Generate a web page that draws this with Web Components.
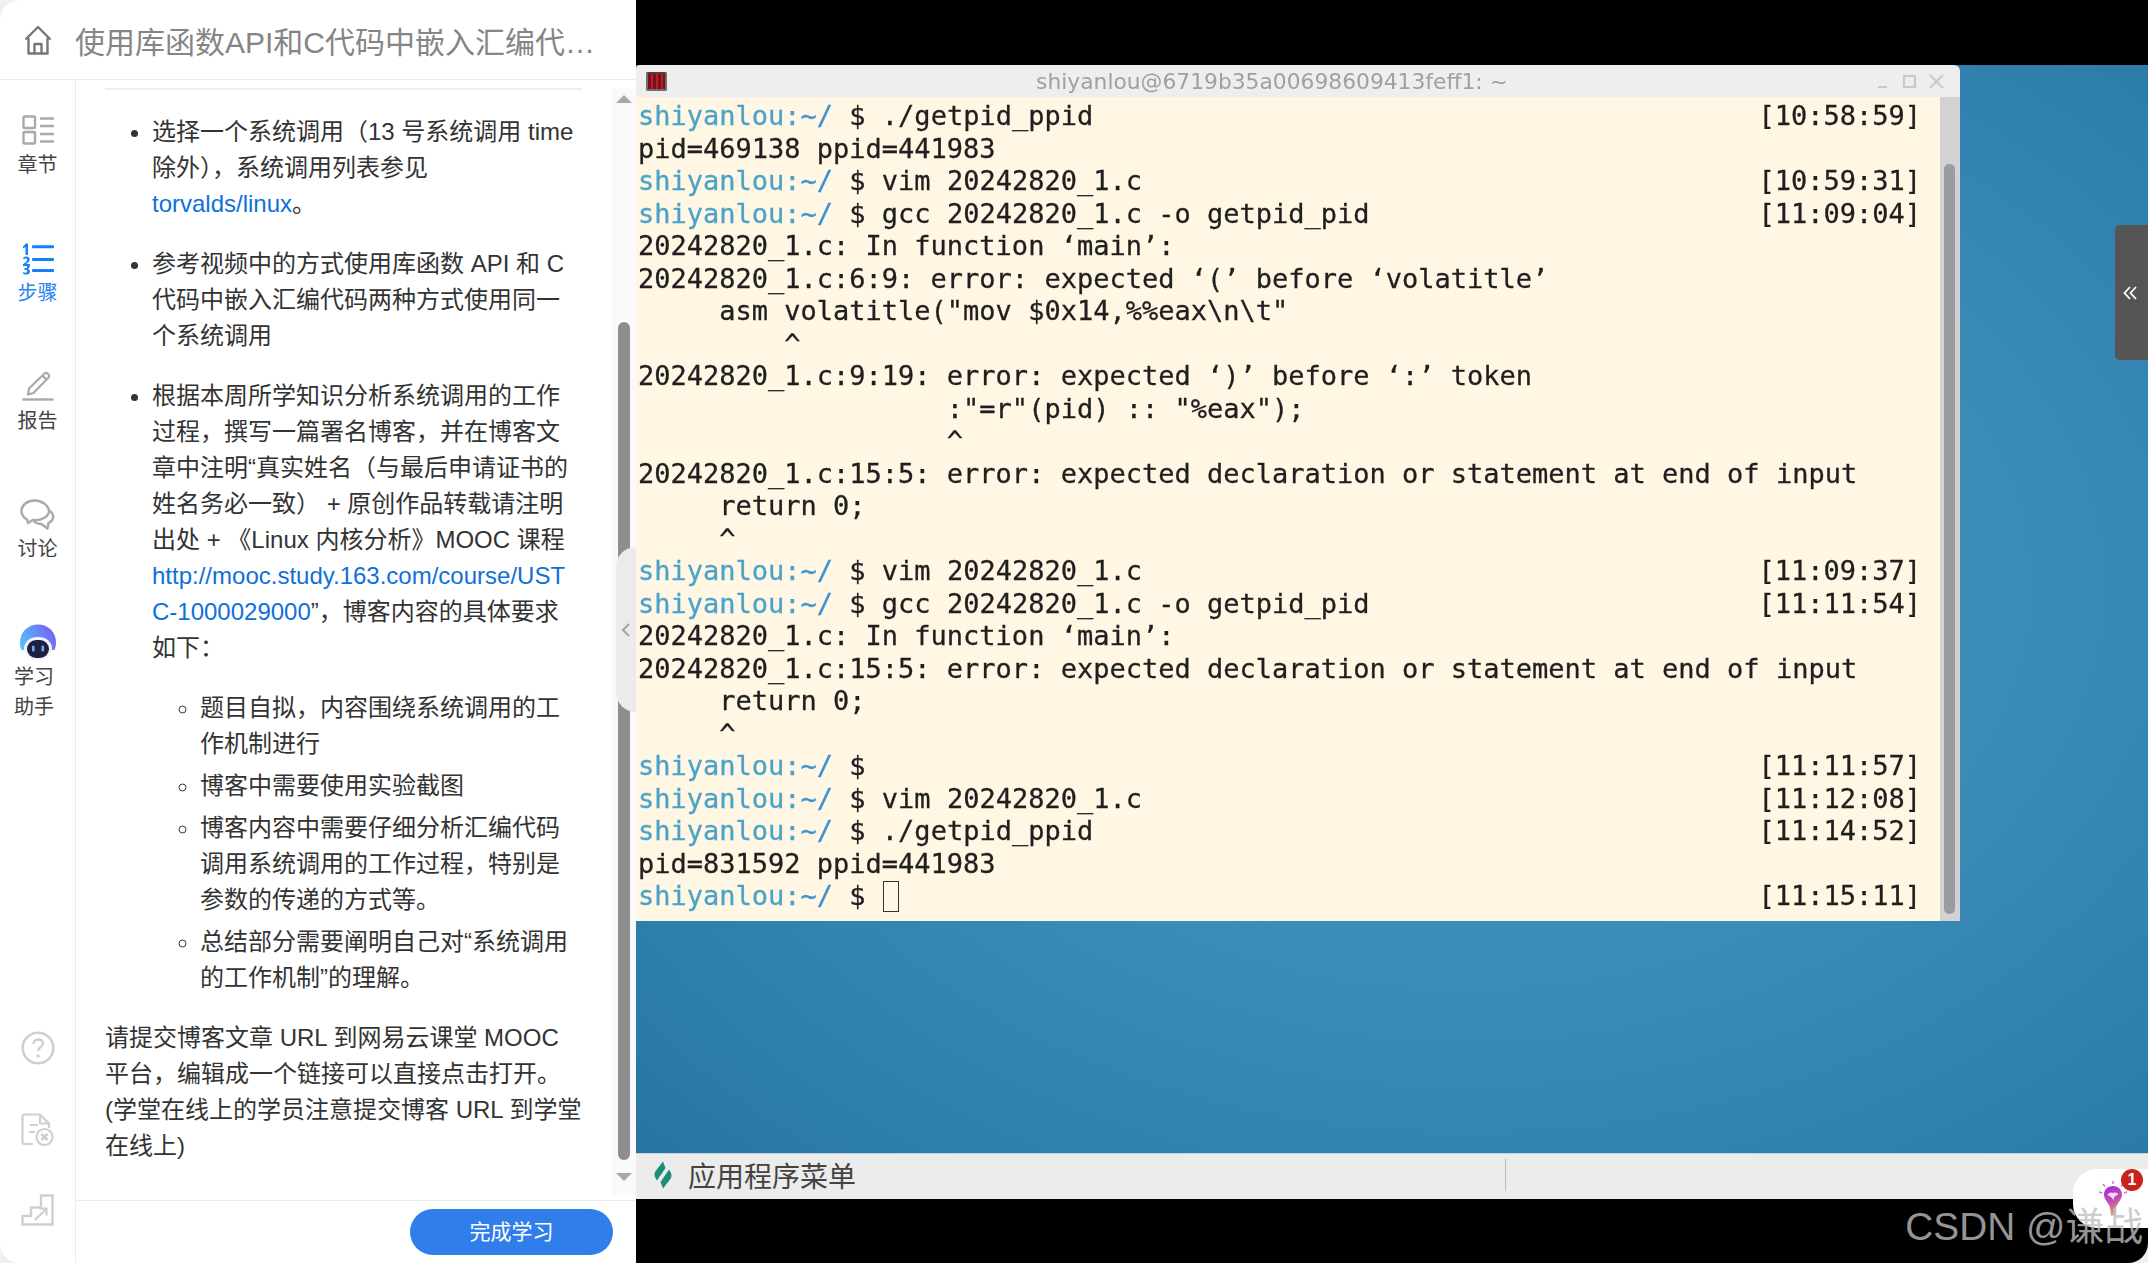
<!DOCTYPE html>
<html lang="zh">
<head>
<meta charset="utf-8">
<title>实验</title>
<style>
    html, body { margin: 0; padding: 0; background: #f0f0f0; }
    body { width: 2148px; height: 1263px; overflow: hidden; font-family: "Liberation Sans", "Noto Sans CJK SC", sans-serif; }
</style>
</head>
<body>
<lab-page>
    <lesson-panel slot="left" heading="使用库函数API和C代码中嵌入汇编代码两种方式使用同一个系统调用">
        <side-rail slot="rail"></side-rail>
        <lab-article>
            <ul>
                <li>选择一个系统调用（13 号系统调用 time 除外），系统调用列表参见 <a>torvalds/linux</a>。</li>
                <li>参考视频中的方式使用库函数 API 和 C 代码中嵌入汇编代码两种方式使用同一个系统调用</li>
                <li>根据本周所学知识分析系统调用的工作过程，撰写一篇署名博客，并在博客文章中注明“真实姓名（与最后申请证书的姓名务必一致） + 原创作品转载请注明出处 + 《Linux 内核分析》MOOC 课程 <a class="url">http://mooc.study.163.com/course/USTC-1000029000</a>”，博客内容的具体要求如下：
                    <ul>
                        <li>题目自拟，内容围绕系统调用的工作机制进行</li>
                        <li>博客中需要使用实验截图</li>
                        <li>博客内容中需要仔细分析汇编代码调用系统调用的工作过程，特别是参数的传递的方式等。</li>
                        <li>总结部分需要阐明自己对“系统调用的工作机制”的理解。</li>
                    </ul>
                </li>
            </ul>
            <p>请提交博客文章 URL 到网易云课堂 MOOC 平台，编辑成一个链接可以直接点击打开。(学堂在线上的学员注意提交博客 URL 到学堂在线上)</p>
        </lab-article>
    </lesson-panel>
    <vm-screen slot="right">
        <term-window slot="window" title-text="shiyanlou@6719b35a00698609413feff1: ~">
            <term-line prompt time="10:58:59">./getpid_ppid</term-line>
            <term-line>pid=469138 ppid=441983</term-line>
            <term-line prompt time="10:59:31">vim 20242820_1.c</term-line>
            <term-line prompt time="11:09:04">gcc 20242820_1.c -o getpid_pid</term-line>
            <term-line>20242820_1.c: In function ‘main’:</term-line>
            <term-line>20242820_1.c:6:9: error: expected ‘(’ before ‘volatitle’</term-line>
            <term-line>     asm volatitle("mov $0x14,%%eax\n\t"</term-line>
            <term-line>         ^</term-line>
            <term-line>20242820_1.c:9:19: error: expected ‘)’ before ‘:’ token</term-line>
            <term-line>                   :"=r"(pid) :: "%eax");</term-line>
            <term-line>                   ^</term-line>
            <term-line>20242820_1.c:15:5: error: expected declaration or statement at end of input</term-line>
            <term-line>     return 0;</term-line>
            <term-line>     ^</term-line>
            <term-line prompt time="11:09:37">vim 20242820_1.c</term-line>
            <term-line prompt time="11:11:54">gcc 20242820_1.c -o getpid_pid</term-line>
            <term-line>20242820_1.c: In function ‘main’:</term-line>
            <term-line>20242820_1.c:15:5: error: expected declaration or statement at end of input</term-line>
            <term-line>     return 0;</term-line>
            <term-line>     ^</term-line>
            <term-line prompt time="11:11:57"></term-line>
            <term-line prompt time="11:12:08">vim 20242820_1.c</term-line>
            <term-line prompt time="11:14:52">./getpid_ppid</term-line>
            <term-line>pid=831592 ppid=441983</term-line>
            <term-line prompt cursor time="11:15:11"></term-line>
        </term-window>
    </vm-screen>
</lab-page>

<script>
class LabPage extends HTMLElement {
    constructor() {
        super();
        this.attachShadow({ mode: 'open' });
    }

    connectedCallback() {
        this.shadowRoot.innerHTML = `
            <style>
                :host {
                    display: flex;
                    position: relative;
                    width: 2148px;
                    height: 1263px;
                    overflow: hidden;
                }
                .mark {
                    position: absolute;
                    right: 5px;
                    bottom: 11px;
                    font-family: "Liberation Sans", "Noto Sans CJK SC", sans-serif;
                    font-size: 38.8px;
                    line-height: 50px;
                    color: rgba(190, 190, 190, 0.8);
                    white-space: nowrap;
                }
            </style>
            <slot name="left"></slot>
            <slot name="right"></slot>
            <div class="mark">CSDN @谦战</div>
        `;
    }
}

class LessonPanel extends HTMLElement {
    constructor() {
        super();
        this.attachShadow({ mode: 'open' });
    }

    connectedCallback() {
        const heading = this.getAttribute('heading') || '';
        this.shadowRoot.innerHTML = `
            <style>
                :host {
                    display: flex;
                    flex-direction: column;
                    flex: none;
                    width: 636px;
                    height: 1263px;
                    background: #fff;
                    border-radius: 20px 0 0 20px;
                    overflow: hidden;
                }
                header {
                    display: flex;
                    align-items: center;
                    flex: none;
                    height: 80px;
                    padding: 0 30px 0 24px;
                    box-sizing: border-box;
                    border-bottom: 1px solid #ececec;
                }
                header svg { flex: none; width: 28px; height: 30px; margin-right: 23px; }
                h1 {
                    margin: 0;
                    min-width: 0;
                    font-size: 30px;
                    font-weight: 400;
                    color: #858585;
                    white-space: nowrap;
                    overflow: hidden;
                    text-overflow: ellipsis;
                }
                .body { display: flex; flex: 1; min-height: 0; }
                .main { display: flex; flex-direction: column; flex: 1; min-width: 0; }
                footer {
                    display: flex;
                    justify-content: flex-end;
                    align-items: flex-start;
                    flex: none;
                    height: 63px;
                    padding: 8px 23px 0 0;
                    box-sizing: border-box;
                    border-top: 1px solid #ececec;
                }
                button {
                    width: 203px;
                    height: 46px;
                    padding: 0 0 5px;
                    border: 0;
                    border-radius: 23px;
                    background: #2f7ee9;
                    color: #fff;
                    font: 21px "Liberation Sans", "Noto Sans CJK SC", sans-serif;
                }
            </style>
            <header>
                <svg viewBox="0 0 28 30" fill="none" stroke="#777" stroke-width="2.4" stroke-linejoin="round">
                    <path d="M1.5 14.5 14 2l12.5 12.5"/>
                    <path d="M4.5 13v15.5h19V13"/>
                    <path d="M10.5 28.5V19h7v9.5"/>
                </svg>
                <h1>${heading}</h1>
            </header>
            <div class="body">
                <slot name="rail"></slot>
                <div class="main">
                    <slot></slot>
                    <footer><button>完成学习</button></footer>
                </div>
            </div>
        `;
    }
}

class RailItem extends HTMLElement {
    constructor() {
        super();
        this.attachShadow({ mode: 'open' });
    }

    connectedCallback() {
        this.shadowRoot.innerHTML = `
            <style>
                :host {
                    display: flex;
                    flex-direction: column;
                    align-items: center;
                    height: 128px;
                    font-size: 20px;
                    line-height: 28px;
                    color: #444;
                }
                :host([active]) { color: #2b85f0; }
                :host([shifted]) .label { padding-right: 7px; line-height: 30px; margin-top: -1px; }
                .icon { display: flex; align-items: center; justify-content: center; height: 36px; margin-bottom: 3px; }
                .label { text-align: center; width: 42px; }
            </style>
            <div class="icon"><slot name="icon"></slot></div>
            <div class="label"><slot></slot></div>
        `;
    }
}

class SideRail extends HTMLElement {
    constructor() {
        super();
        this.attachShadow({ mode: 'open' });
    }

    connectedCallback() {
        this.shadowRoot.innerHTML = `
            <style>
                :host {
                    display: flex;
                    flex-direction: column;
                    flex: none;
                    width: 76px;
                    height: 100%;
                    box-sizing: border-box;
                    padding: 32px 0 35px;
                    border-right: 1px solid #ececec;
                }
                .tools { display: flex; flex-direction: column; align-items: center; gap: 45px; margin-top: auto; }
                .tools div { display: flex; align-items: center; height: 36px; }
            </style>
            <rail-item>
                <svg slot="icon" width="32" height="30" viewBox="0 0 32 30" fill="none" stroke="#a9a9a9" stroke-width="2.4">
                    <rect x="1.5" y="1.5" width="11.5" height="11.5" rx="1"/>
                    <rect x="1.5" y="17" width="11.5" height="11.5" rx="1"/>
                    <path d="M18 3.5h14M18 11h14M18 19h14M18 26.5h14"/>
                </svg>
                章节
            </rail-item>
            <rail-item active>
                <svg slot="icon" width="32" height="33" viewBox="0 0 32 33" fill="#1382f5">
                    <path d="M1 4.500 4 1.500h2V13H3.500V5L1 6.600z"/>
                    <rect x="10" y="3.200" width="22" height="3" rx="1"/>
                    <path d="M1 24v-1.700c3-2.400 4.200-3.300 4.200-4.600 0-1.600-2.200-1.500-3.800-.4v-2c2.600-1.400 6.300-.8 6.300 2.200 0 1.900-1.600 3.100-3.700 4.600h3.900V24z"/>
                    <rect x="10" y="16" width="22" height="3" rx="1"/>
                    <path d="M1.200 32.100v-2c1.700.9 4.200.8 4.200-.8 0-1.200-1.300-1.500-3-1.400v-1.700c1.600 0 2.800-.3 2.800-1.300 0-1.400-2.200-1.300-3.700-.5v-1.900c2.600-1 6.200-.7 6.200 2 0 1.200-.7 2-1.900 2.400 1.400.3 2.200 1.300 2.200 2.500 0 3.100-4.300 3.700-6.800 2.700z"/>
                    <rect x="10" y="27" width="22" height="3" rx="1"/>
                </svg>
                步骤
            </rail-item>
            <rail-item>
                <svg slot="icon" width="32" height="30" viewBox="0 0 32 30" fill="none" stroke="#a9a9a9" stroke-width="2.2" stroke-linejoin="round">
                    <path d="M6 23.500 7 17.500 22.500 2.500a2 2 0 0 1 3 0l1 1a2 2 0 0 1 0 3L11.500 22z"/>
                    <path d="M20.500 4.500l4.500 4.500"/>
                    <path d="M0.500 28.500h31" stroke-width="2.400"/>
                </svg>
                报告
            </rail-item>
            <rail-item>
                <svg slot="icon" width="35" height="31" viewBox="0 0 35 31" fill="none" stroke="#a9a9a9" stroke-width="2.400" stroke-linejoin="round">
                    <path d="M14.500 1.500C7.500 1.500 1.500 6 1.500 12c0 3.500 2 6.500 5.500 8.500l1 3.500 4.500-3c10 1 16.500-4 16.500-9C28.500 6 21.500 1.500 14.500 1.500z"/>
                    <path d="M29 11.500c3.500 2 4.500 5 4 7.500-.5 2.500-2.500 4-4.500 5L27.500 29.500l-6-4.500c-3.500 0-6-1-8-3"/>
                </svg>
                讨论
            </rail-item>
            <rail-item shifted>
                <svg slot="icon" width="38" height="36" viewBox="0 0 38 36">
                    <defs>
                        <linearGradient id="hood" x1="0" y1="0.7" x2="1" y2="0.3">
                            <stop offset="0" stop-color="#52c0fb"/>
                            <stop offset="1" stop-color="#7b5cf2"/>
                        </linearGradient>
                    </defs>
                    <path d="M1 18.500C1 8 9 0.500 19 0.500S37 8 37 18.500c0 3-.6 5.500-1.600 7.500H2.600C1.600 24 1 21.500 1 18.500z" fill="url(#hood)"/>
                    <path d="M5 25c0-7.500 6-12 14-12s14 4.500 14 12c0 6-5 11-14 11S5 31 5 25z" fill="#f3f4fa"/>
                    <rect x="8" y="16" width="22" height="18" rx="9" fill="#1d2140"/>
                    <rect x="13" y="21.500" width="2.600" height="6" rx="1.300" fill="#6fa8f5"/>
                    <rect x="22.500" y="21.500" width="2.600" height="6" rx="1.300" fill="#6fa8f5"/>
                </svg>
                学习助手
            </rail-item>
            <div class="tools">
                <div>
                    <svg width="34" height="34" viewBox="0 0 34 34" fill="none" stroke="#cfcfcf" stroke-width="2.600">
                        <circle cx="17" cy="17" r="15.300"/>
                        <path d="M12.500 13c0-6 9.500-6 9.500-.5 0 3.500-5 3.500-5 7.500" stroke-width="2.400"/>
                        <circle cx="17" cy="25" r="1.700" fill="#cfcfcf" stroke="none"/>
                    </svg>
                </div>
                <div>
                    <svg width="33" height="33" viewBox="0 0 33 33" fill="none" stroke="#cfcfcf" stroke-width="2.200" stroke-linejoin="round">
                        <path d="M12 31H3.500a2 2 0 0 1-2-2V3.500a2 2 0 0 1 2-2H19l9 9V15"/>
                        <path d="M19 1.500v9h9"/>
                        <path d="M9 12h8M8 19h6"/>
                        <circle cx="23.500" cy="24" r="8"/>
                        <path d="M20.500 21l6 6M26.500 21l-6 6" stroke-width="2.600"/>
                    </svg>
                </div>
                <div>
                    <svg width="33" height="32" viewBox="0 0 33 32" fill="none" stroke="#cfcfcf" stroke-width="2.400">
                        <path d="M31.500 1.500V30.500H1.500V22H10V13.500H20V1.500z"/>
                        <path d="M14 26 25 15M18.500 14.500H25.500V21.500" stroke-width="2.200"/>
                    </svg>
                </div>
            </div>
        `;
    }
}

class LabArticle extends HTMLElement {
    constructor() {
        super();
        this.attachShadow({ mode: 'open' });
    }

    connectedCallback() {
        this.shadowRoot.innerHTML = `
            <style>
                :host {
                    display: block;
                    position: relative;
                    flex: 1;
                    min-height: 0;
                    box-sizing: border-box;
                    padding: 8px 54px 0 29px;
                    font-size: 24px;
                    line-height: 36px;
                    color: #333;
                }
                hr { height: 2px; margin: 0 0 5px; border: 0; background: #eee; }
                .track {
                    position: absolute;
                    top: 8px;
                    right: 0;
                    bottom: 5px;
                    width: 24px;
                    background: #fafafa;
                }
                .thumb {
                    position: absolute;
                    top: 234px;
                    left: 6px;
                    width: 12px;
                    height: 838px;
                    border-radius: 6px;
                    background: #8e8e8e;
                }
                .up, .down {
                    position: absolute;
                    left: 4px;
                    width: 0;
                    height: 0;
                    border-left: 8px solid transparent;
                    border-right: 8px solid transparent;
                }
                .up { top: 7px; border-bottom: 8px solid #a8a8a8; }
                .down { bottom: 14px; border-top: 8px solid #a8a8a8; }
                .handle {
                    position: absolute;
                    top: 467px;
                    right: 0;
                    width: 20px;
                    height: 165px;
                    border-radius: 20px 0 0 20px;
                    background: #ebebeb;
                    display: flex;
                    align-items: center;
                    justify-content: center;
                }
            </style>
            <hr>
            <article-body><slot></slot></article-body>
            <div class="track">
                <div class="up"></div>
                <div class="thumb"></div>
                <div class="down"></div>
            </div>
            <div class="handle">
                <svg width="10" height="16" viewBox="0 0 10 16" fill="none" stroke="#a5a5a5" stroke-width="2"><path d="M8 2 2 8l6 6"/></svg>
            </div>
        `;
        this.styleContent();
    }

    // the list markup is passed in as light DOM, so its rules go on the elements themselves
    styleContent() {
        this.querySelectorAll('ul').forEach(ul => {
            const nested = ul.parentElement.closest('ul');
            ul.style.margin = '24px 0 0';
            ul.style.padding = nested ? '0 0 0 48px' : '0 0 0 47px';
            ul.querySelectorAll(':scope > li').forEach((li, i) => {
                if (i > 0) li.style.marginTop = nested ? '6px' : '24px';
            });
        });
        this.querySelectorAll('a').forEach(a => { a.style.color = '#0f6fdb'; });
        this.querySelectorAll('a.url').forEach(a => { a.style.wordBreak = 'break-all'; });
        this.querySelectorAll('p').forEach(p => { p.style.margin = '24px 0 0'; });
    }
}

class ArticleBody extends HTMLElement {
    constructor() {
        super();
        this.attachShadow({ mode: 'open' });
        this.shadowRoot.innerHTML = `<style>:host { display: block; }</style><slot></slot>`;
    }
}

class VmScreen extends HTMLElement {
    constructor() {
        super();
        this.attachShadow({ mode: 'open' });
    }

    connectedCallback() {
        this.shadowRoot.innerHTML = `
            <style>
                :host {
                    display: flex;
                    flex-direction: column;
                    position: relative;
                    flex: 1;
                    min-width: 0;
                    background: #000;
                    border-bottom-right-radius: 20px;
                    overflow: hidden;
                }
                .top { flex: none; height: 65px; }
                .desktop {
                    position: relative;
                    flex: 1;
                    background: radial-gradient(ellipse 1150px 820px at 55% 48%, #4196c0 0%, #3a8bb6 50%, #2d7dab 85%, #27749f 100%);
                }
                .taskbar {
                    display: flex;
                    align-items: center;
                    flex: none;
                    height: 46px;
                    padding: 0 0 3px 17px;
                    box-sizing: border-box;
                    background: #ececec;
                    border-top: 1px solid #bcd5e6;
                    color: #444;
                    font-size: 28px;
                    font-family: "Noto Sans CJK SC", sans-serif;
                }
                .taskbar svg { flex: none; width: 20px; height: 28px; margin-right: 15px; }
                .taskbar .sep { width: 1px; height: 32px; margin-left: 649px; background: #bdbdbd; }
                .bottom { flex: none; height: 64px; }
                .tab {
                    position: absolute;
                    top: 225px;
                    right: 0;
                    display: flex;
                    align-items: center;
                    padding-left: 8px;
                    box-sizing: border-box;
                    width: 33px;
                    height: 135px;
                    border-radius: 5px 0 0 5px;
                    background: #555;
                }
                .helper {
                    position: absolute;
                    right: 0;
                    top: 1169px;
                    width: 75px;
                    height: 59px;
                    border-radius: 24px 0 0 24px;
                    background: #fff;
                }
                .helper svg { position: absolute; left: 26px; top: 12px; }
                .badge {
                    position: absolute;
                    left: 48px;
                    top: 0;
                    width: 22px;
                    height: 22px;
                    border-radius: 50%;
                    background: #c8231c;
                    color: #fff;
                    font: bold 16px/22px "Liberation Sans", sans-serif;
                    text-align: center;
                }
            </style>
            <div class="top"></div>
            <div class="desktop"><slot name="window"></slot></div>
            <div class="taskbar">
                <svg viewBox="0 0 20 28" fill="#1f8b78">
                    <path d="M10 0.500 3 9.500C1 12 1 14.500 2.500 17L4 19.500 12.500 7z"/>
                    <path d="M10 27.500l7-9c2-2.500 2-5 .5-7.500L16 8.500 7.500 21z"/>
                </svg>
                <span>应用程序菜单</span>
                <span class="sep"></span>
            </div>
            <div class="bottom"></div>
            <div class="tab">
                <svg width="14" height="14" viewBox="0 0 14 14" fill="none" stroke="#fff" stroke-width="1.800"><path d="M7 1 1.500 7 7 13M13 1 7.500 7 13 13"/></svg>
            </div>
            <div class="helper">
                <svg width="28" height="42" viewBox="0 0 28 42">
                    <defs>
                        <linearGradient id="bulb" x1="0" y1="0" x2="0.3" y2="1">
                            <stop offset="0" stop-color="#a825d8"/>
                            <stop offset="0.6" stop-color="#c04fb0"/>
                            <stop offset="1" stop-color="#d9a06a"/>
                        </linearGradient>
                    </defs>
                    <path d="M14 5c-5.500 0-9 3.800-9 8.500 0 5 4.500 8 6 13l1 8h4l1-8c1.500-5 6-8 6-13C23 8.800 19.500 5 14 5z" fill="url(#bulb)"/>
                    <path d="M8.500 14c1.500-3 4-3 5.500-2 2-1 4-.5 5.500 1.500-2 .5-3.500 1.500-4.500 3l-.5 3-1.500-2.500c-1.500-1.500-3-2-4.500-3z" fill="#f1d9f7"/>
                    <path d="M14 0v3M4 3l2 2.500M24 3l-2 2.500M0 11l3 1M28 11l-3 1" stroke="#c66de0" stroke-width="1.400"/>
                </svg>
                <div class="badge">1</div>
            </div>
        `;
    }
}

class TermWindow extends HTMLElement {
    constructor() {
        super();
        this.attachShadow({ mode: 'open' });
    }

    connectedCallback() {
        const titleText = this.getAttribute('title-text') || '';
        this.shadowRoot.innerHTML = `
            <style>
                :host {
                    display: flex;
                    flex-direction: column;
                    position: absolute;
                    left: 0;
                    top: 0;
                    width: 1324px;
                    height: 856px;
                    border-radius: 4px 6px 0 0;
                    overflow: hidden;
                }
                .titlebar {
                    display: flex;
                    align-items: center;
                    position: relative;
                    flex: none;
                    height: 32px;
                    background: #eeeeee;
                }
                .appicon {
                    position: absolute;
                    left: 10px;
                    top: 7px;
                    width: 21px;
                    height: 19px;
                    box-sizing: border-box;
                    border: 2px solid #6e6e6e;
                    border-top-color: #5a3a3a;
                    border-radius: 2px;
                    background: repeating-linear-gradient(90deg, #7d0d18 0 3px, #b5202c 3px 5px);
                }
                .name {
                    flex: 1;
                    text-align: center;
                    padding-right: 52px;
                    font-family: "DejaVu Sans", sans-serif;
                    font-size: 21.8px;
                    color: #a0a0a0;
                    white-space: nowrap;
                    filter: blur(0.4px);
                }
                .controls { position: absolute; right: 14px; top: 9px; }
                .content { display: flex; flex: 1; min-height: 0; }
                .lines {
                    flex: 1;
                    min-width: 0;
                    padding: 3px 19px 0 2px;
                    background: #fff6e4;
                    color: #1f1f1f;
                    -webkit-text-stroke: 0.3px currentColor;
                    filter: blur(0.4px);
                }
                .scroll {
                    position: relative;
                    flex: none;
                    width: 20px;
                    background: #d2d2d2;
                }
                .scroll div {
                    position: absolute;
                    left: 4px;
                    top: 67px;
                    bottom: 7px;
                    width: 11px;
                    border-radius: 5px;
                    background: #9b9c9e;
                }
            </style>
            <div class="titlebar">
                <span class="appicon"></span>
                <span class="name">${titleText}</span>
                <svg class="controls" width="68" height="16" viewBox="0 0 68 16" fill="none" stroke="#c9c9c9" stroke-width="2.200">
                    <path d="M0 13h9"/>
                    <rect x="26" y="2" width="11" height="11"/>
                    <path d="M52 1 65 14M65 1 52 14"/>
                </svg>
            </div>
            <div class="content">
                <div class="lines"><slot></slot></div>
                <div class="scroll"><div></div></div>
            </div>
        `;
    }
}

class TermLine extends HTMLElement {
    constructor() {
        super();
        this.attachShadow({ mode: 'open' });
    }

    connectedCallback() {
        const time = this.getAttribute('time');
        const prompt = this.hasAttribute('prompt');
        const cursor = this.hasAttribute('cursor');
        this.shadowRoot.innerHTML = `
            <style>
                :host {
                    display: flex;
                    justify-content: space-between;
                    height: 32.5px;
                    font-family: "DejaVu Sans Mono", monospace;
                    font-size: 27px;
                    line-height: 32.5px;
                    white-space: pre;
                }
                .user { color: #4ba3c9; }
                .path { color: #3b92d1; }
                .cursor {
                    display: inline-block;
                    width: 16px;
                    height: 31px;
                    margin-left: 1px;
                    box-sizing: border-box;
                    border: 1.5px solid #333;
                    vertical-align: -7px;
                }
            </style>
            <span>${prompt ? '<span class="user">shiyanlou:</span><span class="path">~/</span> $ ' : ''}<slot></slot>${cursor ? '<span class="cursor"></span>' : ''}</span>
            ${time ? `<span>[${time}]</span>` : ''}
        `;
    }
}

customElements.define('article-body', ArticleBody);
customElements.define('rail-item', RailItem);
customElements.define('side-rail', SideRail);
customElements.define('lab-article', LabArticle);
customElements.define('lesson-panel', LessonPanel);
customElements.define('term-line', TermLine);
customElements.define('term-window', TermWindow);
customElements.define('vm-screen', VmScreen);
customElements.define('lab-page', LabPage);
</script>
</body>
</html>
